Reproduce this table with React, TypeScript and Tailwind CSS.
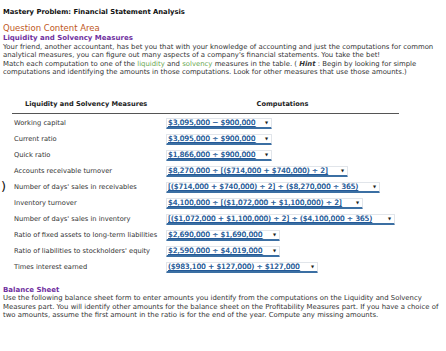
import React from 'react'

const rows = [
  { label: 'Working capital', value: '$3,095,000 − $900,000', w: 'w-[106px]' },
  { label: 'Current ratio', value: '$3,095,000 ÷ $900,000', w: 'w-[106px]' },
  { label: 'Quick ratio', value: '$1,866,000 ÷ $900,000', w: 'w-[106px]' },
  { label: 'Accounts receivable turnover', value: '$8,270,000 ÷ [($714,000 + $740,000) ÷ 2]', w: 'w-[182px]' },
  { label: "Number  of days' sales in receivables", value: '[($714,000 + $740,000) ÷ 2] ÷ ($8,270,000 ÷ 365)', w: 'w-[214px]' },
  { label: 'Inventory turnover', value: '$4,100,000 ÷ [($1,072,000 + $1,100,000) ÷ 2]', w: 'w-[197px]' },
  { label: "Number of days' sales in inventory", value: '[($1,072,000 + $1,100,000) ÷ 2] ÷ ($4,100,000 ÷ 365)', w: 'w-[229px]' },
  { label: 'Ratio of fixed assets to long-term liabilities', value: '$2,690,000 ÷ $1,690,000', w: 'w-[114px]' },
  { label: "Ratio of liabilities to stockholders' equity", value: '$2,590,000 ÷ $4,019,000', w: 'w-[114px]' },
  { label: 'Times interest earned', value: '($983,100 + $127,000) ÷ $127,000', w: 'w-[152px]' },
]

const Pick = ({ value, w }: { value: string; w: string }) => (
  <div className={`${w} h-[11px] flex items-center justify-between bg-white border border-[#e1e5ea] border-b-2 border-b-[#3b6fa3] rounded-[1px] pl-[1px] pr-[3px]`}>
    <span className="text-[#245a98] underline text-[7.3px] leading-none whitespace-nowrap [text-shadow:0.3px_0_0_#245a98]">{value}</span>
    <span className="text-[#222] text-[4px] leading-none">▼</span>
  </div>
)

export default function App() {
  return (
    <div className="w-[446px] h-[351px] bg-white text-[#333] text-[6.9px] leading-[8.4px] font-['DejaVu_Sans',Verdana,sans-serif] relative overflow-hidden">
      <div className="px-[3px] pt-[8px]">
        <h1 className="font-bold text-[#111] text-[6.8px]">Mastery Problem: Financial Statement Analysis</h1>
        <h2 className="mt-[7px] text-[#c0581d] text-[8.5px] leading-[10px]">Question Content Area</h2>
        <h3 className="font-bold text-[#7030a0] text-[7px] mt-[1px]">Liquidity and Solvency Measures</h3>
        <p>
          Your friend, another accountant, has bet you that with your knowledge of accounting and just the computations for common
          analytical measures, you can figure out many aspects of a company's financial statements. You take the bet!
        </p>
        <p>
          Match each computation to one of the <span className="text-[#6aa84f]">liquidity</span> and{' '}
          <span className="text-[#6aa84f]">solvency</span> measures in the table. ( <b><i>Hint</i></b> : Begin by looking for simple
          computations and identifying the amounts in those computations. Look for other measures that use those amounts.)
        </p>
      </div>

      <div className="ml-[12px] mt-[24px] w-[387px] text-[6.7px]">
        <div className="flex font-bold text-[#222] text-[6.6px] pb-[4px] border-b border-[#555]">
          <div className="w-[154px] pl-[13px]">Liquidity and Solvency Measures</div>
          <div className="flex-1 text-center">Computations</div>
        </div>
        <div className="flex flex-col gap-[5px] pt-[4px]">
          {rows.map((r) => (
            <div key={r.label} className="flex items-center h-[11px]">
              <div className="w-[154px] pl-[2px] whitespace-nowrap">{r.label}</div>
              <Pick value={r.value} w={r.w} />
            </div>
          ))}
        </div>
      </div>

      <div className="absolute left-[1px] top-[180px] text-[13px] leading-none text-[#111]">)</div>

      <div className="px-[3px] mt-[13px] leading-[8.5px]">
        <h3 className="font-bold text-[#7030a0] text-[7px]">Balance Sheet</h3>
        <p>
          Use the following balance sheet form to enter amounts you identify from the computations on the Liquidity and Solvency
          Measures part. You will identify other amounts for the balance sheet on the Profitability Measures part. If you have a choice of
          two amounts, assume the first amount in the ratio is for the end of the year. Compute any missing amounts.
        </p>
      </div>
    </div>
  )
}
